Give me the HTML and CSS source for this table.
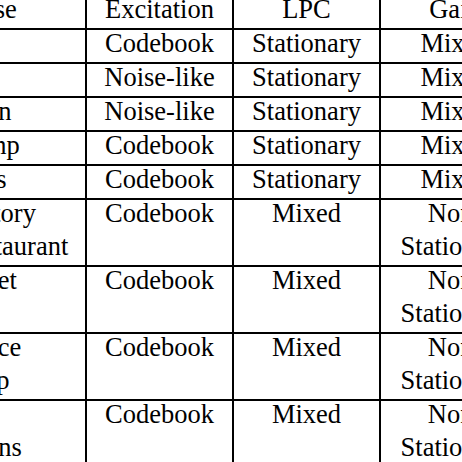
FILE: index.html
```html
<!DOCTYPE html>
<html>
<head>
<meta charset="utf-8">
<link rel="stylesheet" href="styles.css">
</head>
<body>
<table class="tbl">
  <colgroup>
    <col class="col-name">
    <col class="col-mid">
    <col class="col-mid">
    <col class="col-gain">
  </colgroup>
  <thead>
    <tr>
      <th class="name"><div class="cell">Noise</div></th>
      <th><div class="cell">Excitation</div></th>
      <th><div class="cell">LPC</div></th>
      <th><div class="cell">Gain</div></th>
    </tr>
  </thead>
  <tbody>
    <tr>
      <td class="name"><div class="cell">Car</div></td>
      <td><div class="cell">Codebook</div></td>
      <td><div class="cell">Stationary</div></td>
      <td><div class="cell">Mixed</div></td>
    </tr>
    <tr>
      <td class="name"><div class="cell">Fan</div></td>
      <td><div class="cell">Noise-like</div></td>
      <td><div class="cell">Stationary</div></td>
      <td><div class="cell">Mixed</div></td>
    </tr>
    <tr>
      <td class="name"><div class="cell">Train</div></td>
      <td><div class="cell">Noise-like</div></td>
      <td><div class="cell">Stationary</div></td>
      <td><div class="cell">Mixed</div></td>
    </tr>
    <tr>
      <td class="name"><div class="cell">Damp</div></td>
      <td><div class="cell">Codebook</div></td>
      <td><div class="cell">Stationary</div></td>
      <td><div class="cell">Mixed</div></td>
    </tr>
    <tr>
      <td class="name"><div class="cell">Bees</div></td>
      <td><div class="cell">Codebook</div></td>
      <td><div class="cell">Stationary</div></td>
      <td><div class="cell">Mixed</div></td>
    </tr>
    <tr>
      <td class="name"><div class="cell">Factory<br>Restaurant</div></td>
      <td><div class="cell">Codebook</div></td>
      <td><div class="cell">Mixed</div></td>
      <td><div class="cell">Non-<br>Stationary</div></td>
    </tr>
    <tr>
      <td class="name"><div class="cell">Street</div></td>
      <td><div class="cell">Codebook</div></td>
      <td><div class="cell">Mixed</div></td>
      <td><div class="cell">Non-<br>Stationary</div></td>
    </tr>
    <tr>
      <td class="name"><div class="cell">Police<br>Shop</div></td>
      <td><div class="cell">Codebook</div></td>
      <td><div class="cell">Mixed</div></td>
      <td><div class="cell">Non-<br>Stationary</div></td>
    </tr>
    <tr>
      <td class="name"><div class="cell">Fast<br>Trains</div></td>
      <td><div class="cell">Codebook</div></td>
      <td><div class="cell">Mixed</div></td>
      <td><div class="cell">Non-<br>Stationary</div></td>
    </tr>
  </tbody>
</table>
</body>
</html>
```

FILE: styles.css
```css
html, body {
  margin: 0;
  padding: 0;
  background: #fff;
  overflow: hidden;
}

.tbl {
  border-collapse: collapse;
  table-layout: fixed;
  width: 582px;
  margin: -6px 0 0 -53px;
  font-family: "Liberation Serif", "Times New Roman", serif;
  font-size: 26.5px;
  line-height: 33px;
  color: #000;
}

.col-name { width: 138px; }
.col-mid { width: 147px; }
.col-gain { width: 150px; }

.tbl th,
.tbl td {
  border: 2px solid #000;
  padding: 0 0 2px 0;
  text-align: center;
  vertical-align: top;
  font-weight: normal;
  white-space: nowrap;
}

.tbl .name {
  text-align: left;
  padding-left: 6px;
}

.cell {
  margin-top: -3px;
}
```
